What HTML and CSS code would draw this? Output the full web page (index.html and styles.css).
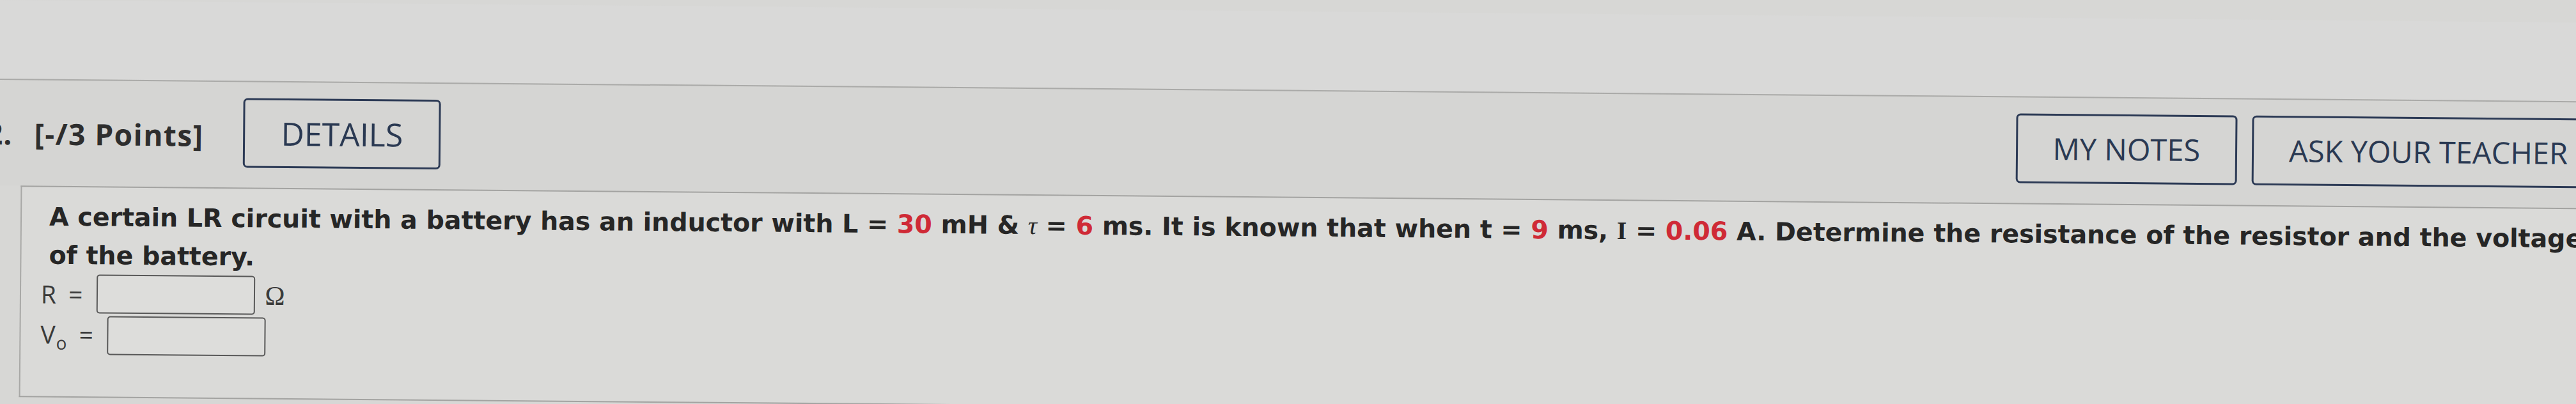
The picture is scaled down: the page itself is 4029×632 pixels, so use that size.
FILE: index.html
```html
<!DOCTYPE html>
<html lang="en">
<head>
<meta charset="utf-8">
<title>Question 2</title>
<link rel="stylesheet" href="styles.css">
</head>
<body>
<div class="page">
  <div class="topband"></div>
  <div class="header">
    <span class="qnum">2.</span>
    <span class="points">[-/3 Points]</span>
    <button class="btn btn-details">DETAILS</button>
    <div class="actions">
      <button class="btn">MY NOTES</button>
      <button class="btn">ASK YOUR TEACHER</button>
    </div>
  </div>
  <div class="question">
    <div class="qbody">
      <p class="qtext">A certain LR circuit with a battery has an inductor with L = <span class="num">30</span> mH &amp; <span class="tau">τ</span> = <span class="num">6</span> ms. It is known that when t = <span class="num">9</span> ms, <span class="ivar">I</span> = <span class="num">0.06</span> A. Determine the resistance of the resistor and the voltage of the battery.</p>
      <div class="answers">
        <div class="ans-row">
          <span class="lbl">R<span class="eq">=</span></span>
          <span class="input"></span>
          <span class="unit">Ω</span>
        </div>
        <div class="ans-row">
          <span class="lbl">V<sub class="sub">o</sub><span class="eq">=</span></span>
          <span class="input"></span>
        </div>
      </div>
    </div>
  </div>
</div>
</body>
</html>
```
FILE: styles.css
```css
html, body {
  margin: 0;
  padding: 0;
  background: #d7d7d5;
  overflow: hidden;
  height: 632px;
}

.page {
  width: 4076px;
  height: 632px;
  transform: rotate(0.5deg);
  transform-origin: 0 0;
  background: #d7d7d5;
}

.topband {
  height: 123px;
  background: #d9d9d8;
}

.header {
  height: 165px;
  border-top: 2px solid #aaaaa8;
  display: flex;
  align-items: center;
  background: #d5d5d3;
  font-family: "Open Sans", "Liberation Sans", sans-serif;
}

.qnum {
  margin-left: -20px;
  font-size: 46px;
  font-weight: 700;
  letter-spacing: 1px;
  color: #2e2e2e;
}

.points {
  margin-left: 34px;
  font-size: 46px;
  font-weight: 700;
  letter-spacing: 1.5px;
  color: #2e2e2e;
}

.btn {
  height: 109px;
  padding: 0 55px;
  border: 3px solid #2c3a55;
  border-radius: 7px;
  background: transparent;
  font-family: "Open Sans", "Liberation Sans", sans-serif;
  font-size: 47px;
  font-weight: 400;
  color: #2a3952;
  line-height: 1;
  margin-top: -6px;
}

.btn-details {
  margin-left: 62px;
  font-size: 50px;
  padding: 0 56px;
}

.actions {
  margin-left: auto;
  display: flex;
  gap: 23px;
}

.question {
  margin-left: 35px;
  height: 327px;
  border-top: 2px solid #a3a3a1;
  border-left: 2px solid #a8a8a6;
  border-bottom: 2px solid #a3a3a1;
  background: #dadad8;
}

.qbody {
  padding: 17px 0 0 43px;
}

.qtext {
  margin: 0;
  font-family: "DejaVu Sans", Verdana, sans-serif;
  font-weight: 700;
  font-size: 39.5px;
  line-height: 59px;
  color: #262626;
}

.num {
  color: #cf2a36;
}

.tau {
  font-family: "Liberation Serif", serif;
  font-style: italic;
  font-weight: 400;
}

.ivar {
  font-family: "Liberation Serif", serif;
  font-weight: 700;
}

.answers {
  margin-left: -12px;
  display: flex;
  flex-direction: column;
  gap: 4px;
}

.ans-row {
  display: flex;
  align-items: center;
  height: 61px;
}

.lbl {
  font-family: "Open Sans", "Liberation Sans", sans-serif;
  font-size: 39px;
  line-height: 61px;
  color: #3a3a3a;
  display: inline-flex;
  align-items: baseline;
}

.sub {
  font-size: 28px;
  vertical-align: baseline;
  position: relative;
  top: 9px;
  margin-left: 1px;
}

.eq {
  margin-left: 19px;
  margin-right: 22px;
}

.input {
  width: 244px;
  height: 57px;
  border: 2px solid #585858;
  border-radius: 5px;
  background: #dddddb;
}

.unit {
  margin-left: 15px;
  font-family: "Liberation Serif", serif;
  font-size: 42px;
  color: #3a3a3a;
}
```
